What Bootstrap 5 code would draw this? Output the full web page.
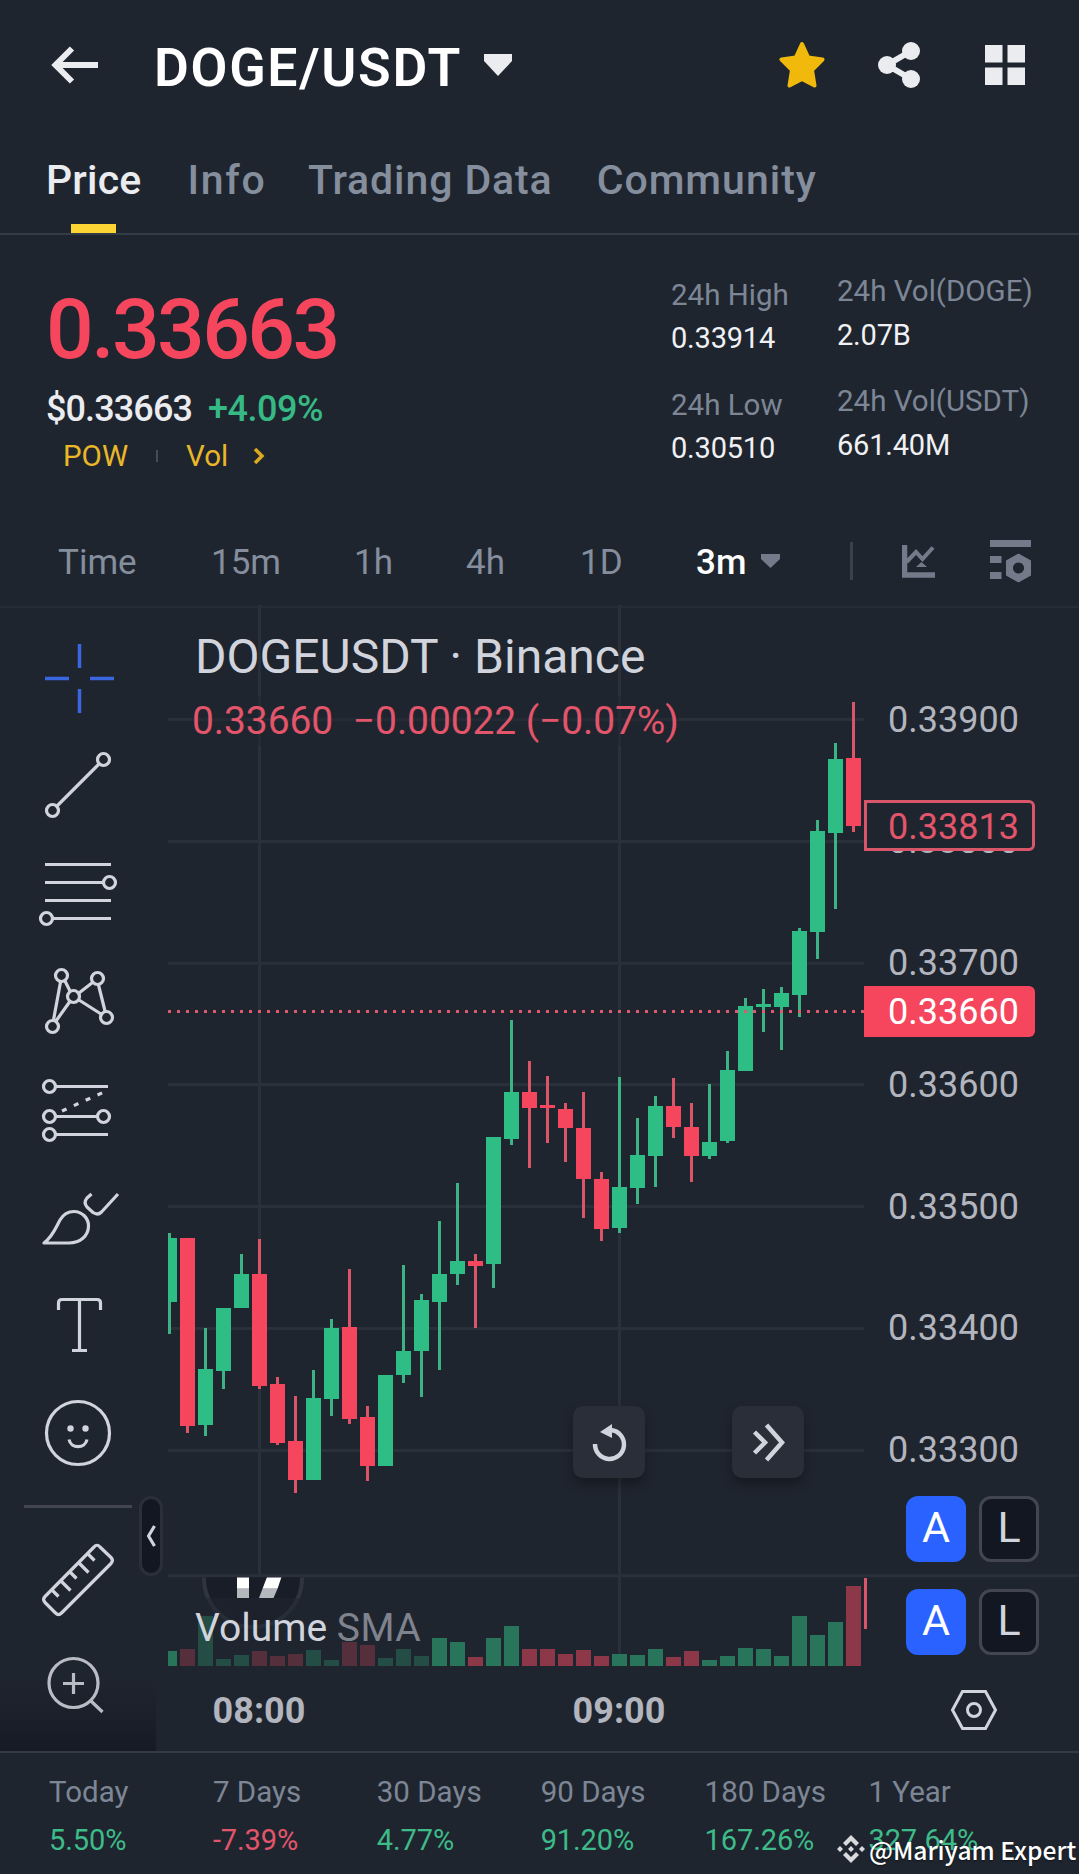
<!DOCTYPE html>
<html lang="en" data-bs-theme="dark">
<head>
<meta charset="utf-8">
<meta name="viewport" content="width=device-width, initial-scale=1">
<title>DOGE/USDT</title>
<link href="https://cdn.jsdelivr.net/npm/bootstrap@5.3.0/dist/css/bootstrap.min.css" rel="stylesheet">
<style>
:root{--bg:#1f252f;--up:#2ebd85;--down:#f6465d;--soft:#848e9c;--ink:#eaecef;--tool:#d1d4dc}
body{background:var(--bg);color:var(--ink);font-family:Roboto,"Liberation Sans",sans-serif;width:1079px;height:1874px;overflow:hidden;position:relative}
svg{display:block;flex:none}
.bar-top{height:130px;padding:0 54px 0 51px}
.pair{font-size:53.5px;font-weight:600;line-height:60px;letter-spacing:1.7px;color:#fff;padding-top:6px;margin-left:55px}
.tabs{height:105px;padding-left:46px;border-bottom:2px solid #333b47;font-size:41px;font-weight:500;line-height:101px}
.tabs a{color:#858e9d;text-decoration:none;position:relative;white-space:nowrap}
.tabs a.on{color:var(--ink)}
.tabs a.on::after{content:"";position:absolute;left:25px;width:45px;bottom:0;height:9px;background:#fcd535}
.ticker{height:284px;padding-left:46px}
.last{font-size:84px;font-weight:500;line-height:84px;color:var(--down);letter-spacing:-2.6px;margin-top:53px}
.conv{font-size:36px;font-weight:500;line-height:40px;margin-top:17px;white-space:nowrap;letter-spacing:-.9px}
.tagrow{font-size:29.5px;line-height:36px;margin-top:9px;color:#e9b728;padding-left:17px}
.stat{font-size:29.5px;color:#7d8695;white-space:nowrap}
.stat div{line-height:43.5px}
.stat .val{color:#f0f1f4;font-size:29px;font-weight:400;letter-spacing:-.2px}
.stat .val+div{margin-top:23px}
.frames{height:89px;border-bottom:2px solid #272d37;font-size:35px;color:#858e9d;line-height:89px;padding-left:58px}
.frames span{white-space:nowrap}
.frames svg{margin-bottom:3px}
.chart{height:1143px}
.tools{width:168px;padding:16px 0 0 24px;position:relative}
.tools svg{fill:none;stroke:var(--tool);stroke-width:3.2;position:relative}
.tools hr{width:108px;margin:17px 0 18px;border:0;border-top:3px solid #434651;opacity:1}
.shade{position:absolute;left:0;bottom:0;width:156px;height:72px;background:linear-gradient(rgba(21,25,36,0),rgba(21,25,36,.9))}
.fold{position:absolute;left:139px;top:888px;width:24px;height:80px;border:3px solid #2a2f3a;border-radius:12px;background:#131722}
.plot{width:696px;position:relative}
.plot svg{overflow:visible}
.lg{position:absolute;white-space:nowrap}
.lg-a{left:27px;top:19px;font-size:48px;line-height:60px;color:#d1d4dc}
.lg-b{left:24px;top:88px;font-size:39px;line-height:50px;color:#e2556a;letter-spacing:-.1px;background:rgba(31,37,47,.5)}
.lg-c{left:10px;top:990px;width:252px;height:68px;font-size:39px;line-height:60px;padding:0 0 0 17px;color:#d1d4dc;background:rgba(31,37,47,.5)}
.sq{position:absolute;top:798px;width:72px;height:72px;border-radius:10px;background:#2a2e39;box-shadow:0 6px 12px rgba(0,0,0,.32)}
.axis{width:215px;padding-top:51.5px;position:relative;font-size:36px;color:#b2b5be}
.axis .lv{line-height:121.8px;padding-left:24px}
.ptag{position:absolute;left:0;width:171px;height:51px;line-height:53px;padding-left:24px;border-radius:0 6px 6px 0}
.ptag.line{top:192px;border:3px solid #d9556a;color:#e2556a;background:var(--bg);line-height:48px;padding-left:21px}
.ptag.full{top:378px;background:var(--down);color:#fff}
.al{gap:13px;padding-left:42px;font-size:43px}
.al span{width:60px;height:66px;text-align:center;border-radius:12px;border:3px solid #434651;background:#131722;color:#d1d4dc;line-height:57px}
.al span:first-child{background:#2962ff;border-color:#2962ff;color:#fff}
.foot{height:123px;border-top:2px solid #333a45;padding:17px 0 0 49px;font-size:29.5px;color:#7d8695}
.foot>div{width:163.9px;white-space:nowrap;line-height:44px}
.foot .v{line-height:52px;font-size:29px;letter-spacing:-.1px;color:#3dbb88}
.wm{position:absolute;left:837px;top:1831px;color:#fff;font:500 24.6px/36px "Noto Sans CJK SC","Noto Sans",sans-serif;white-space:nowrap;text-shadow:0 1px 2px rgba(0,0,0,.5)}
</style>
</head>
<body>
<header class="bar-top d-flex align-items-center">
  <svg width="48" height="40" viewBox="0 0 48 40" fill="none" stroke="#eaecef" stroke-width="6"><path d="M4 20H47M21 3.500L4.500 20L21 36.500"/></svg>
  <div class="pair">DOGE/USDT</div>
  <svg style="margin-left:22px" width="28" height="22" viewBox="0 0 28 22" fill="#eaecef"><path d="M0 0H28V7L14 22L0 7Z"/></svg>
  <div class="ms-auto d-flex align-items-center">
    <svg width="46" height="48" viewBox="0 0 46 48"><path d="M23 3L29.200 16.500L43.500 18.500L33 29L35.500 44.500L23 38L10.500 44.500L13 29L2.500 18.500L16.800 16.500Z" fill="#f0b90b" stroke="#f0b90b" stroke-width="4" stroke-linejoin="round"/></svg>
    <svg style="margin:0 64px 0 52px" width="44" height="48" viewBox="0 0 44 48" fill="#eaecef"><path d="M34 10L10 24L34 38" fill="none" stroke="#eaecef" stroke-width="6"/><circle cx="34" cy="10" r="9"/><circle cx="10" cy="24" r="9"/><circle cx="34" cy="38" r="9"/></svg>
    <svg width="40" height="40" viewBox="0 0 40 40" fill="#eaecef"><path d="M0 0H17.500V17.500H0ZM22.500 0H40V17.500H22.500ZM0 22.500H17.500V40H0ZM22.500 22.500H40V40H22.500Z"/></svg>
  </div>
</header>
<nav class="tabs d-flex">
  <a class="on" href="#" style="letter-spacing:.2px;margin-right:46px">Price</a>
  <a href="#" style="letter-spacing:1.7px;margin-right:41.5px">Info</a>
  <a href="#" style="letter-spacing:.9px;margin-right:44px">Trading Data</a>
  <a href="#" style="letter-spacing:1px">Community</a>
</nav>
<section class="ticker d-flex">
  <div style="width:625px">
    <div class="last">0.33663</div>
    <div class="conv"><span>$0.33663</span><span style="color:#35b985;margin-left:16px;letter-spacing:-.5px">+4.09%</span></div>
    <div class="tagrow d-flex align-items-center"><span>POW</span><svg style="margin:0 23px" width="12" height="12"><path d="M6 0V12" stroke="#454d59" stroke-width="2"/></svg><span>Vol</span><svg style="margin-left:25px" width="12" height="18" viewBox="0 0 12 18" fill="none" stroke="#dda91f" stroke-width="3.500"><path d="M2 2L9 9L2 16"/></svg></div>
  </div>
  <div class="stat" style="width:166px;padding-top:38.5px"><div>24h High</div><div class="val">0.33914</div><div>24h Low</div><div class="val">0.30510</div></div>
  <div class="stat" style="padding-top:35px"><div>24h Vol(DOGE)</div><div class="val">2.07B</div><div>24h Vol(USDT)</div><div class="val">661.40M</div></div>
</section>
<div class="frames d-flex align-items-center">
  <span style="width:153px">Time</span><span style="width:143px">15m</span><span style="width:112px">1h</span><span style="width:114px">4h</span><span style="width:116px">1D</span><span style="color:#fff;font-weight:500;width:65px">3m</span>
  <svg width="20" height="15" viewBox="0 0 20 15" fill="#737b8b"><path d="M0 0H19V5L9.500 14L0 5Z"/></svg>
  <svg style="margin-left:69px" width="3" height="38"><path d="M1.500 0V38" stroke="#3a414d" stroke-width="3"/></svg>
  <svg style="margin-left:49px" width="33" height="33" viewBox="0 0 33 33" fill="none" stroke="#737b8b"><path d="M2.500 0V30H33" stroke-width="5.500"/><path d="M4.500 17L14 7L20.500 14L31 2.500" stroke-width="4"/><path d="M14 22L19.500 17L25 22Z" fill="#737b8b" stroke="none"/></svg>
  <svg style="margin-left:55px" width="42" height="44" viewBox="0 0 42 44" fill="#737b8b"><path d="M0 1H41V8H0ZM0 17H11.500V24H0ZM0 33H11.500V40H0Z"/><path fill-rule="evenodd" d="M28.500 14.500L41 21.500V36.500L28.500 43.500L16 36.500V21.500ZM28.500 23.500a5.500 5.500 0 1 0 .01 0Z"/></svg>
</div>
<main class="chart d-flex">
  <aside class="tools">
    <div class="shade"></div>
    <svg width="108" height="108" viewBox="24 624 108 108" style="stroke:#3a66e0;stroke-width:3.500"><path d="M45 678.500H69M90 678.500H114M79.500 644V668M79.500 689V713"/></svg>
    <svg width="108" height="108" viewBox="24 732 108 108"><circle cx="103.500" cy="759.500" r="6"/><circle cx="52.500" cy="810.500" r="6"/><path d="M57 806L99 764"/></svg>
    <svg width="108" height="108" viewBox="24 840 108 108"><circle cx="109.500" cy="882.500" r="6"/><circle cx="46.500" cy="918.500" r="6"/><path d="M45 864.500H111M45 882.500H103M45 900.500H111M53 918.500H111"/></svg>
    <svg width="108" height="108" viewBox="24 948 108 108"><circle cx="61.500" cy="975.500" r="6"/><circle cx="97.500" cy="978.500" r="6"/><circle cx="73.500" cy="996.500" r="6"/><circle cx="52.500" cy="1026.500" r="6"/><circle cx="106.500" cy="1017.500" r="6"/><path d="M60.500 982L53.500 1020M65 981L70 991M69.500 1002L56 1021M79 993L92.500 982.500M79 1000L101 1014M98.500 985L105 1011"/></svg>
    <svg width="108" height="108" viewBox="24 1056 108 108"><circle cx="49.500" cy="1086.500" r="6"/><circle cx="49.500" cy="1116.500" r="6"/><circle cx="103.500" cy="1116.500" r="6"/><circle cx="49.500" cy="1134.500" r="6"/><path d="M56 1086.500H108M56 1116.500H97M56 1134.500H108"/><path d="M62 1111L104 1092" stroke-dasharray="5 8"/></svg>
    <svg width="108" height="108" viewBox="24 1164 108 108" stroke-linejoin="round"><path d="M44 1243C53 1236 55 1229 60 1220C64 1213 69 1211.500 74 1211.500C82 1211.500 88.500 1218 88.500 1226C88.500 1236 80 1243 69 1243Z"/><path d="M91.500 1194L87 1198C84.500 1201 84.500 1204 87 1207L93 1212.500C96 1214.500 99 1214.500 101.500 1212L118 1194"/></svg>
    <svg width="108" height="108" viewBox="24 1272 108 108"><path d="M58.500 1310V1303Q58.500 1299.500 62 1299.500H97Q100.500 1299.500 100.500 1303V1310M79.500 1299.500V1350.500M72 1350.500H87"/></svg>
    <svg width="108" height="108" viewBox="24 1380 108 108"><circle cx="78" cy="1433" r="31.500"/><path d="M69 1439.500C71 1449 85 1449 87 1439.500"/><g fill="#d1d4dc" stroke="none"><circle cx="70.500" cy="1428.500" r="3.200"/><circle cx="85.500" cy="1428.500" r="3.200"/></g></svg>
    <hr>
    <svg width="108" height="108" viewBox="24 1526 108 108"><path stroke-linejoin="round" d="M94 1547Q97 1543.500 100 1547L111 1557.500Q114 1560.500 111 1563.500L61.500 1613Q58.500 1616 55.500 1613L45 1602.500Q42 1599.500 45 1596.500ZM52 1590L58.500 1596.500M61 1581L70.500 1590.500M70 1572L76.500 1578.500M79 1563L88.500 1572.500M88 1554L94.500 1560.500"/></svg>
    <svg width="108" height="108" viewBox="24 1634 108 108" style="stroke:#b9bcc5"><circle cx="73.500" cy="1683" r="24.500"/><path d="M63 1683.500H84M73.500 1673V1694M91 1701L102.500 1712"/></svg>
    <div class="fold"><svg style="margin:26px 0 0 5px" width="9" height="22" viewBox="0 0 9 22"><path d="M7.500 1L1.500 11L7.500 21"/></svg></div>
  </aside>
  <div class="plot">
    <svg id="cv" width="696" height="1143" viewBox="168 608 696 1143" font-family="Roboto, sans-serif">
      <g stroke="#2a303a" stroke-width="3"><path d="M259.500 605V1576M619.500 605V1666M168 719.500H864M168 841.500H864M168 963.300H864M168 1084.600H864M168 1206.500H864M168 1328.500H864M168 1450.500H864M168 1575.700H1079"/></g>
      <clipPath id="cut"><rect x="190" y="1577.500" width="130" height="60"/></clipPath>
      <g clip-path="url(#cut)"><circle cx="253" cy="1578" r="49" fill="#191d28" stroke="#2f3540" stroke-width="4"/><path d="M237 1577H249V1588.700H237ZM267 1577H281.500L277.500 1588.700H262.500Z" fill="#fff"/><path d="M237 1588.700H249V1598H237ZM262.500 1588.700H277.500L273.500 1598H259Z" fill="#b4b8bc"/></g>
      <g id="bars"></g>
      <path d="M168 1011.500H864" stroke="#e05a6e" stroke-width="3" stroke-dasharray="3 6"/>
      <path d="M865.500 1578V1629" stroke="#d9556a" stroke-width="3"/>
      <g font-size="36" font-weight="700" fill="#b2b5be" text-anchor="middle"><text x="259" y="1723">08:00</text><text x="619" y="1723">09:00</text></g>
    </svg>
    <div class="lg lg-a">DOGEUSDT · Binance</div>
    <div class="lg lg-b">0.33660&ensp;−0.00022 (−0.07%)</div>
    <div class="lg lg-c">Volume <span style="color:#7f838d;letter-spacing:.5px">SMA</span></div>
    <div class="sq" style="left:405px"><svg width="72" height="72" viewBox="573 1406 72 72" fill="none" stroke="#d1d4dc" stroke-width="4.500"><path d="M595 1444A14.500 14.500 0 1 0 611 1430"/><path d="M600 1432L612 1424V1438Z" fill="#d1d4dc" stroke="none"/></svg></div>
    <div class="sq" style="left:564px"><svg width="72" height="72" viewBox="732 1406 72 72" fill="none" stroke="#d1d4dc" stroke-width="4.500"><path d="M754.500 1432L765 1442.500L754.500 1453M766.500 1425L782 1442.500L766.500 1460"/></svg></div>
  </div>
  <div class="axis">
    <div class="lv">0.33900</div><div class="lv">0.33800</div><div class="lv">0.33700</div><div class="lv">0.33600</div><div class="lv">0.33500</div><div class="lv">0.33400</div><div class="lv">0.33300</div>
    <div class="al d-flex" style="margin-top:-16px"><span>A</span><span>L</span></div>
    <div class="al d-flex" style="margin-top:27px"><span>A</span><span>L</span></div>
    <svg style="margin:34px 0 0 85.500px" width="48" height="42" viewBox="0 0 48 42" fill="none" stroke="#d1d4dc" stroke-width="3"><path d="M12.500 2.500H35.500L45.500 21L35.500 39.500H12.500L2.500 21Z"/><circle cx="24" cy="21" r="6.500"/></svg>
    <div class="ptag line">0.33813</div>
    <div class="ptag full">0.33660</div>
  </div>
</main>
<footer class="foot d-flex">
  <div>Today<div class="v">5.50%</div></div>
  <div>7 Days<div class="v" style="color:#e2556a">-7.39%</div></div>
  <div>30 Days<div class="v">4.77%</div></div>
  <div>90 Days<div class="v">91.20%</div></div>
  <div>180 Days<div class="v">167.26%</div></div>
  <div>1 Year<div class="v">327.64%</div></div>
</footer>
<div class="wm d-flex align-items-center"><svg class="me-1" width="28" height="28" viewBox="0 0 28 28" fill="#d9dadd"><path d="M14 0L22 8L19 11L14 6L9 11L6 8ZM3 11L6 14L3 17L0 14ZM14 11L17 14L14 17L11 14ZM25 11L28 14L25 17L22 14ZM6 20L9 17L14 22L19 17L22 20L14 28Z"/></svg><span>@Mariyam Expert</span></div>
<script src="https://cdn.jsdelivr.net/npm/bootstrap@5.3.0/dist/js/bootstrap.bundle.min.js"></script>
<script>
// [rising, high, body top, body bottom, low, volume height]
const rows=[[1,1233,1238,1302,1334,15],[0,1238,1238,1426,1433,17],[1,1328,1369,1425,1436,50],[1,1308,1308,1371,1389,7],[1,1254,1274,1308,1308,11],[0,1239,1274,1386,1389,15],[0,1377,1384,1443,1445,10],[0,1396,1441,1480,1493,12],[1,1370,1398,1480,1480,16],[1,1319,1328,1399,1416,6],[0,1269,1327,1419,1424,24],[0,1406,1417,1466,1481,21],[1,1375,1375,1466,1466,8],[1,1265,1351,1375,1383,17],[1,1294,1300,1351,1397,10],[1,1221,1274,1302,1370,28],[1,1183,1261,1274,1285,24],[0,1254,1261,1266,1328,9],[1,1137,1137,1264,1288,28],[1,1020,1092,1139,1145,40],[0,1061,1092,1108,1168,17],[0,1076,1105,1108,1143,17],[0,1103,1109,1128,1162,12],[0,1092,1128,1179,1218,16],[0,1172,1179,1229,1241,10],[1,1077,1187,1228,1233,12],[1,1118,1155,1188,1204,11],[1,1096,1106,1156,1187,17],[0,1078,1106,1127,1138,9],[0,1103,1127,1156,1182,15],[1,1084,1142,1156,1159,6],[1,1051,1070,1141,1143,10],[1,998,1006,1071,1071,18],[1,989,1004,1007,1032,17],[1,987,993,1007,1050,10],[1,928,931,995,1017,50],[1,820,831,932,959,31],[1,743,759,833,909,44],[0,702,758,826,832,80]];
const g=document.getElementById('bars');
const rect=(x,y,w,h,c)=>{const r=document.createElementNS('http://www.w3.org/2000/svg','rect');
  for(const [k,v] of Object.entries({x,y,width:w,height:h,fill:c}))r.setAttribute(k,v);g.append(r)};
rows.forEach(([up,hi,t,b,lo,vol],i)=>{
  const c=169.5+18*i,x=Math.max(168,c-7.5),w=c+7.5-x;
  rect(c-1.5,hi,3,lo-hi,up?'#3cb285':'#dc5468');
  rect(x,t,w,b-t,up?'#2ebd85':'#f6465d');
  rect(x,1666-vol,w,vol,up?'#28755c':'#8c3848');
});
</script>
</body>
</html>
